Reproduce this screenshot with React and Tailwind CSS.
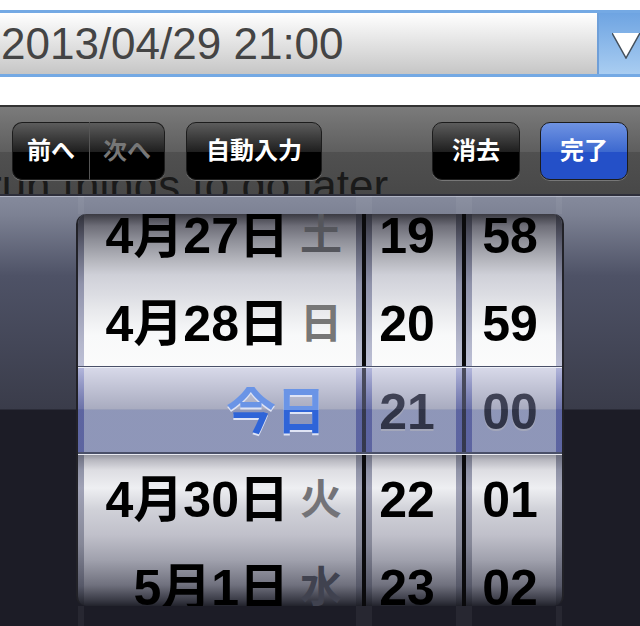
import React from 'react';

const cjk = '"Liberation Sans", "Noto Sans CJK JP", sans-serif';

const dates = [
  { d: '4月27日', w: '土', tone: 'text-[#55565c]' },
  { d: '4月28日', w: '日', tone: 'text-[#777]' },
  { today: true },
  { d: '4月30日', w: '火', tone: 'text-[#737378]' },
  { d: '5月1日', w: '水', tone: 'text-[#40424f]' },
];
const hours = ['19', '20', '21', '22', '23'];
const minutes = ['58', '59', '00', '01', '02'];

// wheel shading, same for every column
const wheelBg = 'bg-[linear-gradient(to_bottom,#3a3a42_0px,#6e6e78_12px,#8e8f98_26px,#b8b9c0_48px,#cfd0d8_61px,#dcdde3_81px,#e8e9ec_96px,#f8f9fa_121px,#fbfbfb_152px,#ffffff_153px,#ffffff_195px,#d1dafb_196px,#d1dafb_240px,#8e8f98_240px,#b8b8c0_246px,#dddde2_256px,#eeeff2_274px,#d0d1d8_296px,#c0c0ca_321px,#a0a1ad_346px,#70717e_371px,#3a3b46_386px,#22232c_392px)]';
const edgeBg = 'bg-[linear-gradient(to_bottom,#30313a_0px,#5c5e70_30px,#8f92aa_70px,#b4b7cc_130px,#bcbfd6_152px,#c0c4e8_153px,#7078c8_195px,#626bc6_196px,#626bc6_240px,#6a6c7c_240px,#8f92a6_256px,#a0a2b6_274px,#858797_330px,#565868_372px,#1f2028_392px)]';

function Edge() {
  return <div className={`w-[6px] shrink-0 ${edgeBg}`}></div>;
}

function Spindle() {
  return <div className="w-[4px] shrink-0 bg-[#0a0a0c]"></div>;
}

function NumberWheel({ items, shift }) {
  return (
    <div className={`w-[84px] shrink-0 overflow-hidden ${wheelBg}`}>
      <div className={`flex flex-col mt-[-22px] ${shift}`}>
        {items.map((n, i) => (
          <div
            key={n}
            className={`h-[88px] shrink-0 flex items-center justify-center text-[50px] font-bold text-black leading-none ${i === 2 ? '[text-shadow:0_2px_0_#fff]' : ''}`}
          >
            {n}
          </div>
        ))}
      </div>
    </div>
  );
}

function ToolButton({ children, className = '', tone = 'text-white' }) {
  return (
    <div className={`h-[58px] flex items-center justify-center rounded-[10px] border border-[#1c1c1c] bg-[linear-gradient(to_bottom,#5c5c5c_0px,#1e1e1e_29px,#000_29px,#000_100%)] shadow-[0_1px_0_#777] font-bold text-[24px] ${tone} ${className}`}>
      {children}
    </div>
  );
}

function Reflection({ className }) {
  return (
    <div className={`w-[488px] flex shrink-0 px-[2px] ${className}`}>
      <div className="w-[6px] bg-white/5"></div>
      <div className="w-[272px]"></div>
      <div className="w-[16px] bg-white/5"></div>
      <div className="w-[84px]"></div>
      <div className="w-[16px] bg-white/5"></div>
      <div className="w-[84px]"></div>
      <div className="w-[6px] bg-white/5"></div>
    </div>
  );
}

export default function App() {
  return (
    <div className="w-[640px] h-[626px] overflow-hidden bg-white flex flex-col" style={{ fontFamily: cjk }}>
      {/* Input field */}
      <div className="h-[10px] shrink-0"></div>
      <div className="h-[67px] shrink-0 flex border-y-[3px] border-[#74a9e4]">
        <div className="flex-1 flex items-center pl-[1px] bg-[linear-gradient(to_bottom,#ffffff,#c6c6c6)] text-[44px] text-[#444]">
          2013/04/29 21:00
        </div>
        <div className="w-[43px] shrink-0 flex items-start justify-start border-l-[2px] border-[#6f9fd8] bg-[linear-gradient(to_bottom,#6ea4e2,#a9cdf1)] pl-[13px] pt-[20px]">
          <svg width="28" height="26" viewBox="0 0 28 26">
            <path d="M0 0H28L14 25Z" fill="#fff" />
            <path d="M0 0L14 25L28 0" fill="none" stroke="#44505c" strokeWidth="1.5" />
          </svg>
        </div>
      </div>
      <div className="h-[28px] shrink-0"></div>

      {/* Toolbar */}
      <div className="relative h-[89px] shrink-0 flex items-start gap-[21px] px-[12px] pt-[15px] overflow-hidden border-t-[2px] border-[#333] bg-[linear-gradient(to_bottom,#7b7b7b_0px,#5e5e5e_45px,#505050_45px,#484848_100%)]">
        <span className="absolute left-[-13px] top-[57px] text-[44px] leading-none whitespace-nowrap text-[#1a1a1a]">run things to do later</span>
        <div className="relative flex">
          <ToolButton className="w-[77px] rounded-r-none border-r-0">前へ</ToolButton>
          <ToolButton className="w-[76px] rounded-l-none border-l-[#555]" tone="text-[#777]">次へ</ToolButton>
        </div>
        <ToolButton className="relative w-[136px]">自動入力</ToolButton>
        <ToolButton className="relative w-[88px] ml-[89px]">消去</ToolButton>
        <ToolButton className="relative w-[88px] ml-[-1px] border-[#1b2a55] !bg-[linear-gradient(to_bottom,#6f93e2_0px,#3c68cf_29px,#2450c8_29px,#2450c8_100%)]">完了</ToolButton>
      </div>

      {/* Picker */}
      <div className="flex-1 flex flex-col items-start pl-[76px] border-t-[2px] border-[#2e2f3b] shadow-[inset_0_1px_0_#b0b4c4] bg-[linear-gradient(to_bottom,#858a9c_0px,#7d8294_18px,#4e5266_80px,#3a3c4a_213px,#1c1c26_214px,#1c1c26_100%)]">
        <Reflection className="h-[18px]" />
        <div className="relative w-[488px] h-[392px] shrink-0 flex overflow-hidden rounded-[10px] border-x-[2px] border-[#222228]">
          <div className="flex">
            <Edge />
            <div className={`w-[272px] shrink-0 overflow-hidden ${wheelBg}`}>
              <div className="flex flex-col mt-[-22px]">
                {dates.map((row, i) => (
                  <div key={i} className="h-[88px] shrink-0 flex items-center justify-end">
                    {row.today ? (
                      <span className="relative z-10 mr-[30px] text-[50px] font-bold leading-none text-transparent bg-clip-text bg-[linear-gradient(to_bottom,#6a94e6_46%,#2f64d8_46%)] [filter:drop-shadow(0_2px_0_#dfe4f5)]">今日</span>
                    ) : (
                      <>
                        <span className="text-[50px] font-bold leading-none text-black">{row.d}</span>
                        <span className={`w-[67px] pl-[11px] text-[42px] font-bold leading-none ${row.tone}`}>{row.w}</span>
                      </>
                    )}
                  </div>
                ))}
              </div>
            </div>
            <Edge />
            <Spindle />
            <Edge />
            <NumberWheel items={hours} shift="-ml-[14px]" />
            <Edge />
            <Spindle />
            <Edge />
            <NumberWheel items={minutes} shift="-ml-[8px]" />
            <Edge />
          </div>
          {/* selection bar */}
          <div className="absolute left-0 right-0 top-[152px] h-[88px] border-t border-b-[2px] border-[#4a5068] shadow-[inset_0_1px_0_#eef0f8,0_1px_0_#e8e9f0] bg-[linear-gradient(to_bottom,rgba(163,166,204,0.42)_0%,rgba(105,110,145,0.58)_50%,rgba(88,95,130,0.55)_50%,rgba(88,95,130,0.55)_100%)]"></div>
        </div>
        <Reflection className="flex-1" />
      </div>
    </div>
  );
}
